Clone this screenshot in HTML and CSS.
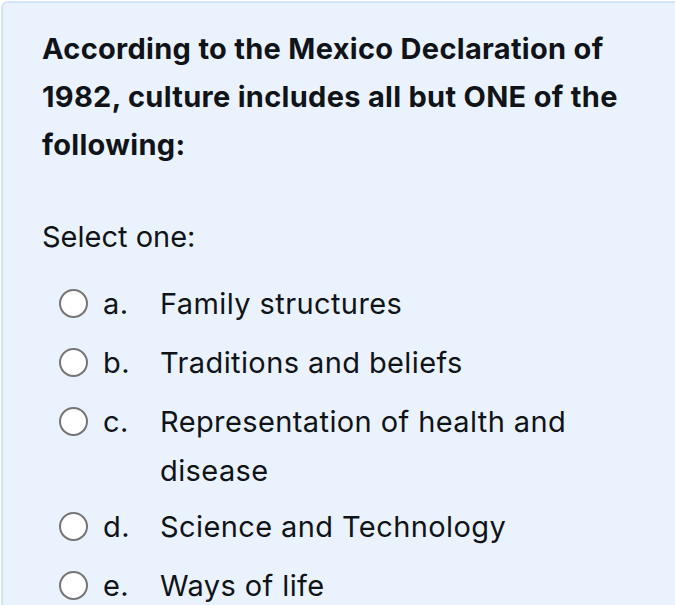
FILE: index.html
```html
<!DOCTYPE html>
<html>
<head>
<meta charset="utf-8">
<link rel="stylesheet" href="styles.css">
</head>
<body>
<div class="card">
  <div class="qtext">According to the Mexico Declaration of 1982, culture includes all but ONE of the following:</div>
  <div class="prompt">Select one:</div>
  <div class="answers">
    <div class="opt"><span class="radio"></span><span class="letter">a.</span><span class="label">Family structures</span></div>
    <div class="opt"><span class="radio"></span><span class="letter">b.</span><span class="label">Traditions and beliefs</span></div>
    <div class="opt opt-long"><span class="radio"></span><span class="letter">c.</span><span class="label">Representation of health and disease</span></div>
    <div class="opt"><span class="radio"></span><span class="letter">d.</span><span class="label">Science and Technology</span></div>
    <div class="opt"><span class="radio"></span><span class="letter">e.</span><span class="label">Ways of life</span></div>
  </div>
</div>
</body>
</html>
```
FILE: styles.css
```css
html, body {
  margin: 0;
  padding: 0;
  background: #ffffff;
  overflow: hidden;
}
body {
  font-family: Inter, Roboto, "Liberation Sans", sans-serif;
  color: #101418;
}
.card {
  margin: 1px 0 0 1px;
  width: 720px;
  min-height: 660px;
  box-sizing: border-box;
  border: 2px solid #d3e3f8;
  border-radius: 7px;
  background: #eaf2fd;
  padding: 22px 0 0 39px;
}
.qtext {
  font-size: 29px;
  font-weight: 700;
  line-height: 48px;
  letter-spacing: 0.3px;
  width: 600px;
}
.prompt {
  font-size: 29px;
  line-height: 48px;
  margin-top: 44px;
}
.answers {
  margin-top: 18px;
  display: flex;
  flex-direction: column;
  gap: 10px;
}
.opt {
  display: flex;
  align-items: flex-start;
  font-size: 29px;
  line-height: 49px;
  letter-spacing: 0.4px;
  padding-left: 17px;
}
.opt-long {
  margin-bottom: -3px;
}
.radio {
  flex: none;
  width: 25px;
  height: 25px;
  border: 2px solid #757575;
  border-radius: 50%;
  background: #ffffff;
  margin-top: 10px;
  margin-right: 15px;
}
.letter {
  flex: none;
  width: 57px;
}
.label {
  width: 430px;
}
```
